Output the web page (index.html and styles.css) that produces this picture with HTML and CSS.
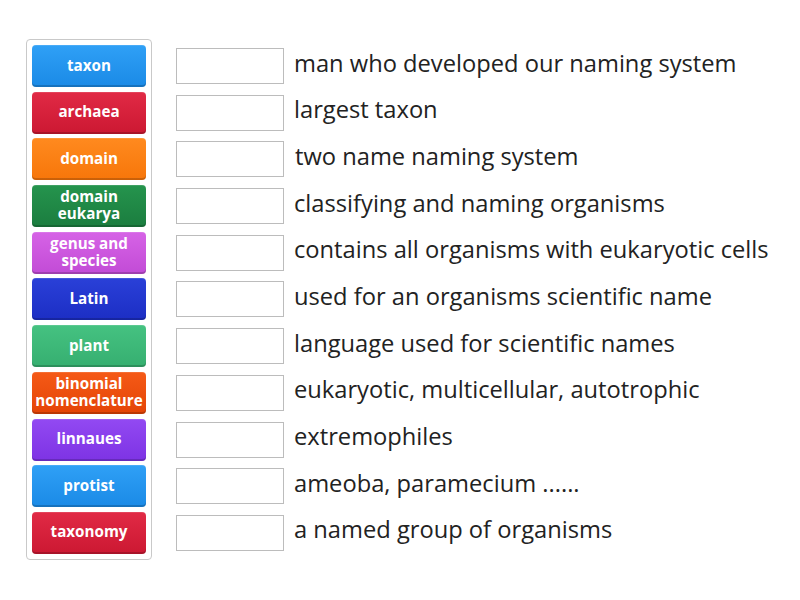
FILE: index.html
```html
<!DOCTYPE html>
<html lang="en">
<head>
<meta charset="utf-8">
<title>Match up</title>
<link rel="stylesheet" href="styles.css">
</head>
<body>
<main class="board">
  <div class="tray">
    <div class="tile blue">taxon</div>
    <div class="tile red">archaea</div>
    <div class="tile orange">domain</div>
    <div class="tile green">domain eukarya</div>
    <div class="tile pink">genus and species</div>
    <div class="tile navy">Latin</div>
    <div class="tile mint">plant</div>
    <div class="tile flame">binomial nomenclature</div>
    <div class="tile violet">linnaues</div>
    <div class="tile blue">protist</div>
    <div class="tile red">taxonomy</div>
  </div>
  <ul class="clues">
    <li class="clue"><span class="slot"></span><span class="text">man who developed our naming system</span></li>
    <li class="clue"><span class="slot"></span><span class="text">largest taxon</span></li>
    <li class="clue"><span class="slot"></span><span class="text shift">two name naming system</span></li>
    <li class="clue"><span class="slot"></span><span class="text">classifying and naming organisms</span></li>
    <li class="clue"><span class="slot"></span><span class="text">contains all organisms with eukaryotic cells</span></li>
    <li class="clue"><span class="slot"></span><span class="text">used for an organisms scientific name</span></li>
    <li class="clue"><span class="slot"></span><span class="text">language used for scientific names</span></li>
    <li class="clue"><span class="slot"></span><span class="text">eukaryotic, multicellular, autotrophic</span></li>
    <li class="clue"><span class="slot"></span><span class="text">extremophiles</span></li>
    <li class="clue"><span class="slot"></span><span class="text">ameoba, paramecium ......</span></li>
    <li class="clue"><span class="slot"></span><span class="text">a named group of organisms</span></li>
  </ul>
</main>
</body>
</html>
```
FILE: styles.css
```css
html, body {
  margin: 0;
  padding: 0;
  background: #ffffff;
}

body {
  font-family: "Open Sans", "Noto Sans", sans-serif;
  width: 800px;
  height: 600px;
  overflow: hidden;
}

.board {
  display: flex;
  align-items: flex-start;
  padding: 39px 0 0 26px;
}

/* column of draggable answer tiles */
.tray {
  width: 114px;
  padding: 5px;
  border: 1px solid #c9c9c9;
  border-radius: 4px;
  display: flex;
  flex-direction: column;
  gap: 4.7px;
}

.tile {
  height: 42px;
  box-sizing: border-box;
  border-radius: 4px;
  display: flex;
  align-items: center;
  justify-content: center;
  text-align: center;
  color: #ffffff;
  font-weight: 700;
  font-size: 15.2px;
  line-height: 17px;
  padding: 0 2px 2px;
  box-shadow: inset 0 -2px 0 rgba(0, 0, 0, 0.18), inset 0 1px 0 rgba(255, 255, 255, 0.12);
}

.blue   { background: linear-gradient(#2fa0f6, #1a8ae6); }
.red    { background: linear-gradient(#e12a45, #cc1832); }
.orange { background: linear-gradient(#ff8a1f, #f7760a); }
.green  { background: linear-gradient(#25944d, #1b7d3f); }
.pink   { background: linear-gradient(#d663e6, #c24bd6); }
.navy   { background: linear-gradient(#2a40d8, #1c2ec4); }
.mint   { background: linear-gradient(#45c281, #36af70); }
.flame  { background: linear-gradient(#f55a17, #e44406); }
.violet { background: linear-gradient(#9249f2, #7d33e4); }

/* clue rows with empty drop slots */
.clues {
  list-style: none;
  margin: 6px 0 0 24px;
  padding: 0;
  display: flex;
  flex-direction: column;
  gap: 4.7px;
}

.clue {
  height: 42px;
  display: flex;
  align-items: center;
}

.slot {
  width: 106px;
  height: 34px;
  border: 1px solid #bcbcbc;
  background: #ffffff;
  flex: none;
}

.text {
  margin-left: 10px;
  margin-top: -7px;
  font-size: 23.7px;
  color: #222222;
  white-space: nowrap;
}

.text.shift {
  margin-left: 11px;
}
```
